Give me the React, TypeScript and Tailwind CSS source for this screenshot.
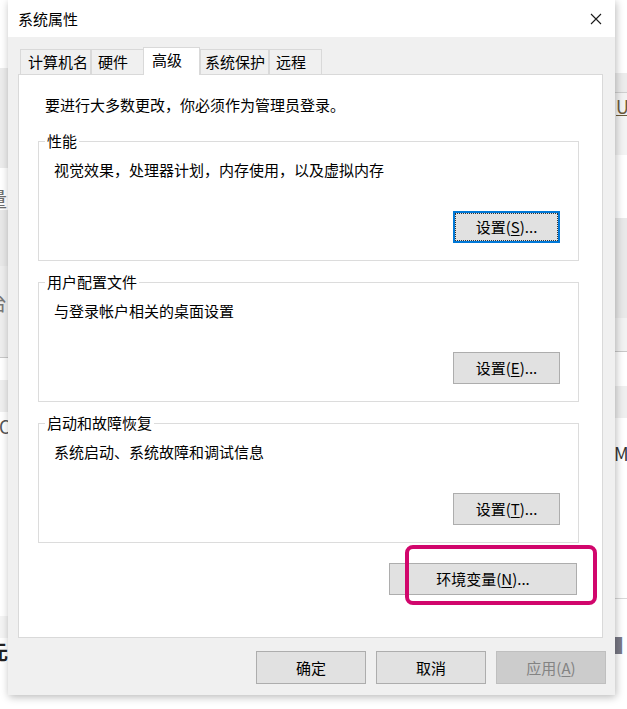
import React from "react";

type Band = { h: string; c: string; g?: string; gc?: string };

// window fragments peeking out behind the dialog
const leftBands: Band[] = [
  { h: "h-[68px]", c: "bg-white" },
  { h: "h-[100px]", c: "bg-[#ececec]" },
  { h: "h-[20px]", c: "bg-white" },
  { h: "h-[22px]", c: "bg-white", g: "量", gc: "-ml-[13px] text-[20px] text-[#6e6e6e]" },
  { h: "h-[56px]", c: "bg-[#e8e8e8]" },
  { h: "h-[22px]", c: "bg-[#eeeeee]" },
  { h: "h-[30px]", c: "bg-[#eeeeee]", g: "台", gc: "-ml-[13px] text-[20px] text-[#777777]" },
  { h: "h-[40px]", c: "bg-[#eeeeee] border-b border-[#c8c8c8]" },
  { h: "h-[22px]", c: "bg-white" },
  { h: "h-[32px]", c: "bg-[#efefef]" },
  { h: "h-[28px]", c: "bg-white", g: "C", gc: "-ml-[1px] text-[18px] text-[#555555]" },
  { h: "h-[176px]", c: "bg-white" },
  { h: "h-[22px]", c: "bg-[#f4f4f4]" },
  { h: "h-[28px]", c: "bg-white", g: "元", gc: "-ml-[12px] text-[20px] font-bold text-[#222222]" },
  { h: "h-[60px]", c: "bg-white" },
];

const rightBands: Band[] = [
  { h: "h-[73px]", c: "bg-white" },
  { h: "h-[20px]", c: "bg-[#ececec] border-b border-[#cfcfcf]" },
  { h: "h-[26px]", c: "bg-[#f3f3f3]", g: "U", gc: "ml-[1px] text-[18px] text-[#6b5a3a] underline" },
  { h: "h-[36px]", c: "bg-[#f3f3f3]" },
  { h: "h-[63px]", c: "bg-white" },
  { h: "h-[100px]", c: "bg-[#e9e9e9]" },
  { h: "h-[34px]", c: "bg-[#f2f2f2] border-b border-[#c8c8c8]" },
  { h: "h-[34px]", c: "bg-white" },
  { h: "h-[32px]", c: "bg-[#efefef]" },
  { h: "h-[20px]", c: "bg-white" },
  { h: "h-[30px]", c: "bg-white", g: "M", gc: "-ml-[1px] text-[18px] text-[#333333]" },
  { h: "h-[131px]", c: "bg-white border-b border-[#d8d8d8]" },
  { h: "h-[37px]", c: "bg-white" },
  { h: "h-[18px]", c: "bg-white", g: "▌", gc: "-ml-[2px] text-[18px] text-[#7a7a86]" },
  { h: "h-[60px]", c: "bg-white" },
];

function Strip({ bands, className }: { bands: Band[]; className: string }) {
  return (
    <div className={`flex flex-col overflow-hidden ${className}`}>
      {bands.map((b, i) => (
        <div key={i} className={`flex shrink-0 items-center overflow-hidden ${b.h} ${b.c}`}>
          {b.g && <span className={`whitespace-nowrap leading-none ${b.gc}`}>{b.g}</span>}
        </div>
      ))}
    </div>
  );
}

const tabs = [
  { label: "计算机名", cls: "h-[25px] w-[71px] pl-[7px] bg-[#f0f0f0]" },
  { label: "硬件", cls: "h-[25px] w-[54px] pl-[6px] bg-[#f0f0f0]" },
  { label: "高级", cls: "relative z-10 -mb-px -ml-[2px] h-[28px] w-[57px] pl-[8px] pb-[4px] bg-white" },
  { label: "系统保护", cls: "h-[25px] w-[69px] pl-[4px] bg-[#f0f0f0]" },
  { label: "远程", cls: "h-[25px] w-[53px] pl-[6px] bg-[#f0f0f0]" },
];

function Key({ k }: { k: string }) {
  return <span className="underline underline-offset-[2px]">{k}</span>;
}

function Btn({ children, className }: { children: React.ReactNode; className: string }) {
  return (
    <button
      type="button"
      className={`flex items-center justify-center text-[15px] leading-[20px] ${className}`}
    >
      {children}
    </button>
  );
}

const plainBtn = "border border-[#adadad] bg-[#e1e1e1] text-black";

function Group({
  legend,
  text,
  k,
  focused,
}: {
  legend: string;
  text: string;
  k: string;
  focused?: boolean;
}) {
  return (
    <fieldset className="ml-[19px] mr-[23px] border border-[#dcdcdc]">
      <legend className="ml-[6px] px-[2px] leading-[20px]">{legend}</legend>
      <div className="pb-[17px] pl-[15px] pr-[18px]">
        <p className="mt-[9px] leading-[20px]">{text}</p>
        <div className="mt-[31px] flex justify-end">
          <Btn
            className={
              focused
                ? "h-[32px] w-[107px] border-2 border-[#0078d7] bg-[#e1e1e1] text-black outline-1 outline-dotted outline-[#333333] outline-offset-[-3px]"
                : `h-[32px] w-[107px] ${plainBtn}`
            }
          >
            设置(<Key k={k} />)...
          </Btn>
        </div>
      </div>
    </fieldset>
  );
}

export default function App() {
  return (
    <div className="flex h-[709px] w-[627px] overflow-hidden bg-white font-['Noto_Sans_CJK_SC',sans-serif] text-[15px] text-black">
      <Strip bands={leftBands} className="w-[8px] shrink-0" />

      <div className="relative z-10 flex h-[695px] w-[607px] shrink-0 flex-col bg-[#f0f0f0] shadow-[1px_2px_8px_rgba(0,0,0,0.28)]">
        <div className="flex h-[37px] items-center justify-between bg-white pl-[10px] pr-[13px]">
          <span className="leading-[20px]">系统属性</span>
          <svg width="12" height="12" viewBox="0 0 12 12" className="text-[#1a1a1a]">
            <path d="M1 1 L11 11 M11 1 L1 11" stroke="currentColor" strokeWidth="1.1" fill="none" />
          </svg>
        </div>

        <div className="px-[10px] pt-[10px]">
          <div className="flex h-[27px] items-end pl-[2px]">
            {tabs.map((t) => (
              <div
                key={t.label}
                className={`flex items-center border border-b-0 border-[#d9d9d9] leading-[20px] ${t.cls}`}
              >
                {t.label}
              </div>
            ))}
          </div>

          <div className="mr-[2px] h-[564px] border border-[#d9d9d9] bg-white pt-[20px]">
            <p className="pl-[26px] leading-[20px]">要进行大多数更改，你必须作为管理员登录。</p>
            <div className="mt-[16px] flex flex-col gap-[11px]">
              <Group legend="性能" text="视觉效果，处理器计划，内存使用，以及虚拟内存" k="S" focused />
              <Group legend="用户配置文件" text="与登录帐户相关的桌面设置" k="E" />
              <Group legend="启动和故障恢复" text="系统启动、系统故障和调试信息" k="T" />
            </div>
            <div className="mt-[20px] flex justify-end pr-[25px]">
              <div className="relative">
                <Btn className={`h-[32px] w-[188px] ${plainBtn}`}>
                  环境变量(<Key k="N" />)...
                </Btn>
                <div className="pointer-events-none absolute -top-[18px] -right-[20px] -bottom-[10px] left-[16px] rounded-[8px] border-[4px] border-[#d1066c]" />
              </div>
            </div>
          </div>
        </div>

        <div className="flex justify-end gap-[10px] pr-[9px] pt-[13px]">
          <Btn className={`h-[33px] w-[110px] ${plainBtn}`}>确定</Btn>
          <Btn className={`h-[33px] w-[110px] ${plainBtn}`}>取消</Btn>
          <Btn className="h-[33px] w-[110px] border border-[#bfbfbf] bg-[#cccccc] text-[#838383]">
            应用(<Key k="A" />)
          </Btn>
        </div>
      </div>

      <Strip bands={rightBands} className="flex-1" />
    </div>
  );
}
